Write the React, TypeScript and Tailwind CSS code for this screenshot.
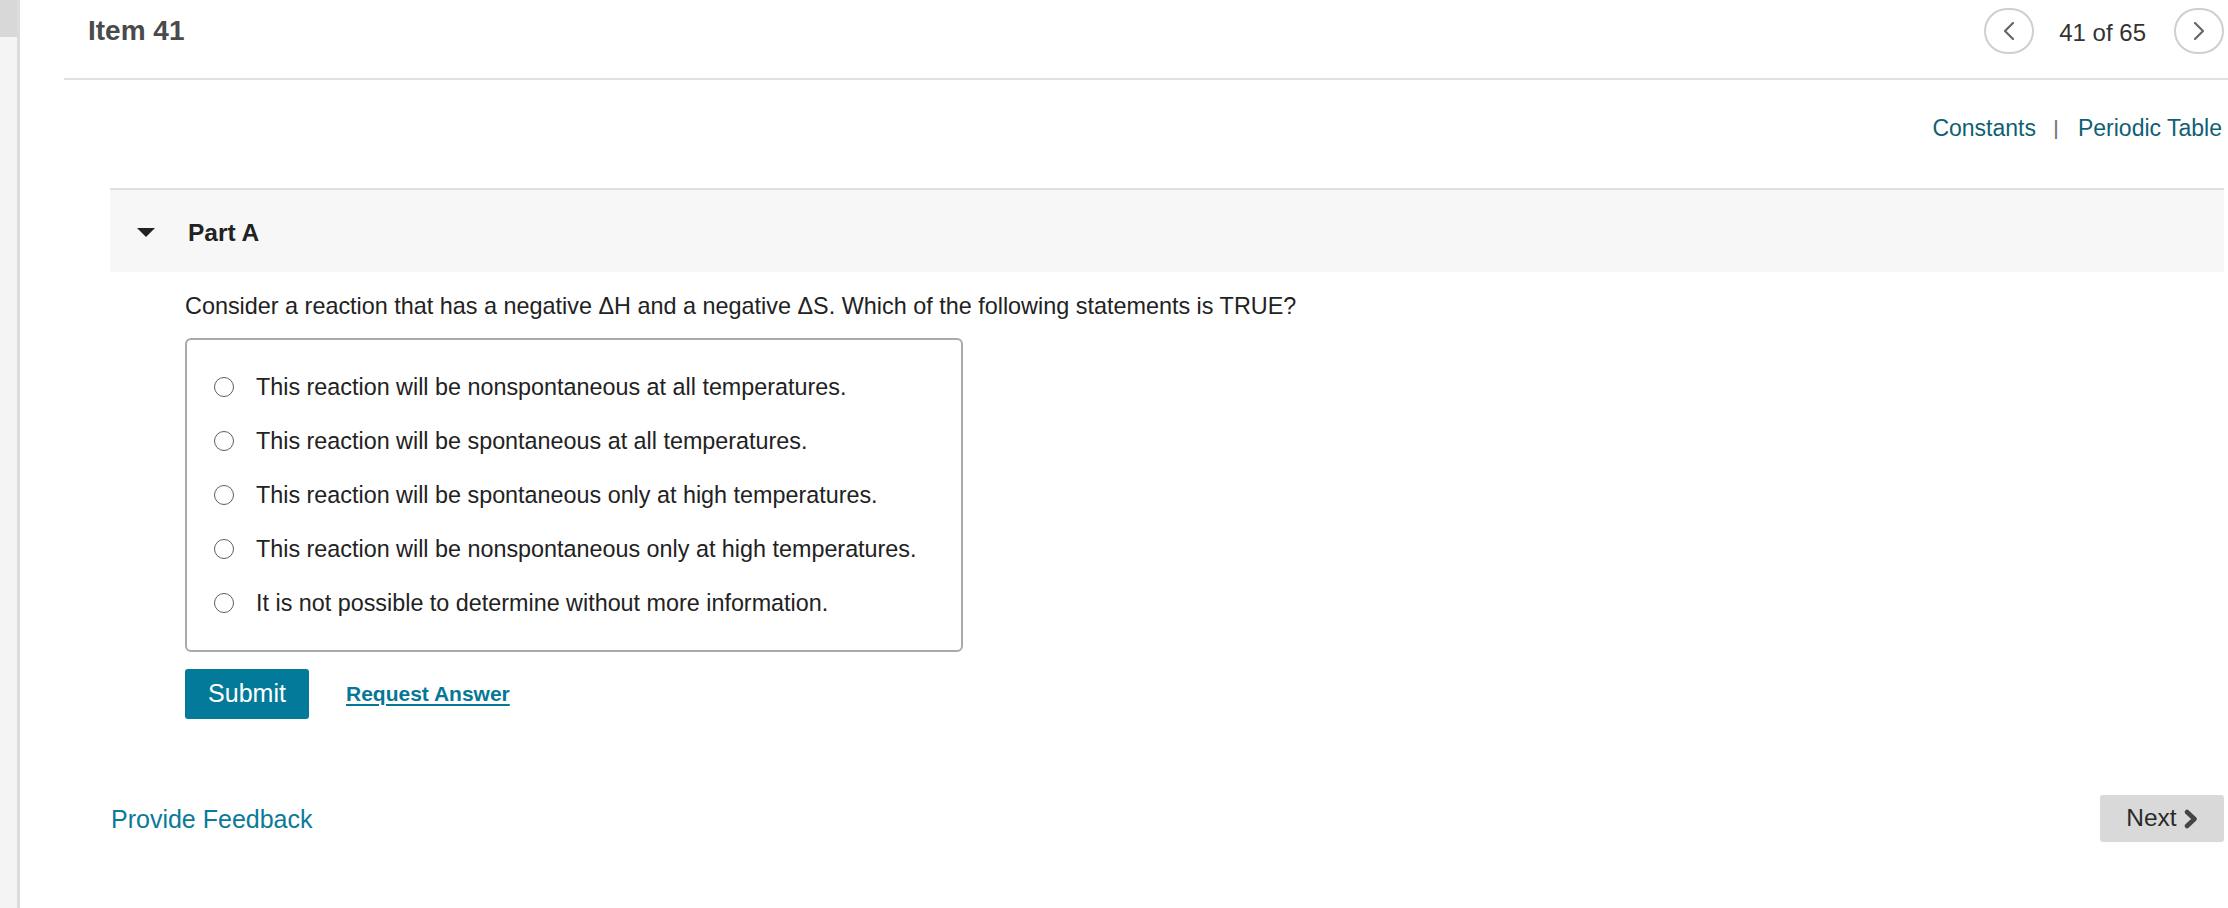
import React from "react";

const options = [
  "This reaction will be nonspontaneous at all temperatures.",
  "This reaction will be spontaneous at all temperatures.",
  "This reaction will be spontaneous only at high temperatures.",
  "This reaction will be nonspontaneous only at high temperatures.",
  "It is not possible to determine without more information.",
];

function Chevron({ dir }: { dir: "left" | "right" }) {
  return (
    <svg width="14" height="20" viewBox="0 0 14 20" fill="none">
      {dir === "left" ? (
        <polyline points="11,2 3,10 11,18" stroke="#666" strokeWidth="2.2" strokeLinecap="round" strokeLinejoin="round" />
      ) : (
        <polyline points="3,2 11,10 3,18" stroke="#666" strokeWidth="2.2" strokeLinecap="round" strokeLinejoin="round" />
      )}
    </svg>
  );
}

export default function App() {
  return (
    <div className="flex h-[908px] w-[2228px] bg-white font-['Liberation_Sans',Arial,sans-serif] overflow-hidden">
      {/* sidebar */}
      <div className="flex w-[20px] flex-col border-r-[3px] border-[#dcdcdc] bg-[#f4f4f4]">
        <div className="h-[37px] bg-[#d8d8d8]" />
      </div>

      <div className="flex flex-1 flex-col">
        {/* header */}
        <div className="ml-[44px] h-[80px] border-b-2 border-[#e0e0e0]">
          <div className="flex h-[62px] items-center justify-between pl-[24px] pr-[4px]">
            <div className="text-[28px] font-bold leading-[28px] text-[#4a4a4a]">Item 41</div>
            <div className="flex items-center">
              <div className="flex h-[46px] w-[50px] items-center justify-center rounded-full border-2 border-[#cfcfcf]">
                <Chevron dir="left" />
              </div>
              <div className="ml-[25px] mr-[28px] mt-[4px] text-[24px] leading-[24px] text-[#333]">41 of 65</div>
              <div className="flex h-[46px] w-[50px] items-center justify-center rounded-full border-2 border-[#cfcfcf]">
                <Chevron dir="right" />
              </div>
            </div>
          </div>
        </div>

        {/* links */}
        <div className="flex h-[108px] items-start justify-end pr-[6px] pt-[37px] text-[23px] leading-[23px]">
          <span className="text-[#0f5f75]">Constants</span>
          <span className="ml-[17px] mr-[19px] scale-y-90 text-[#777]">|</span>
          <span className="text-[#0f5f75]">Periodic Table</span>
        </div>

        {/* part section */}
        <div className="ml-[90px] mr-[4px] flex flex-col">
          <div className="border-t-2 border-[#e0e0e0]">
            <div className="flex h-[82px] items-center bg-[#f7f7f7] pl-[27px] pt-[3px]">
              <svg width="18" height="9" viewBox="0 0 18 9">
                <polygon points="0,0 18,0 9,9" fill="#222" />
              </svg>
              <span className="ml-[33px] text-[24.5px] font-bold leading-[24px] text-[#222]">Part A</span>
            </div>
          </div>

          <div className="pl-[75px]">
            <p className="mt-[22px] text-[23.4px] leading-[24px] text-[#222]">
              Consider a reaction that has a negative ΔH and a negative ΔS. Which of the following statements is TRUE?
            </p>

            <div className="mt-[20px] w-[778px] rounded-[6px] border-2 border-[#a9a9a9] py-[20px] pl-[27px]">
              {options.map((o) => (
                <div key={o} className="flex h-[54px] items-center">
                  <div className="h-[20px] w-[20px] rounded-full border-[1.5px] border-[#5f5f5f] bg-white" />
                  <span className="ml-[22px] text-[23.35px] leading-[24px] text-[#222]">{o}</span>
                </div>
              ))}
            </div>

            <div className="mt-[17px] flex items-center">
              <div className="flex h-[50px] w-[124px] items-center justify-center rounded-[3px] bg-[#037a99] text-[25px] text-white">
                Submit
              </div>
              <span className="ml-[37px] text-[21px] font-bold text-[#067796] underline underline-offset-[3px]">
                Request Answer
              </span>
            </div>
          </div>

          <div className="mt-[76px] flex h-[47px] items-center justify-between">
            <span className="ml-[1px] mt-[3px] text-[25px] text-[#0a7a98]">Provide Feedback</span>
            <div className="flex h-[47px] w-[124px] items-center justify-center rounded-[3px] bg-[#d9d9d9]">
              <span className="text-[24.5px] text-[#2a2a2a]">Next</span>
              <svg className="ml-[7px]" width="14" height="20" viewBox="0 0 14 20">
                <polyline points="3,3 10.5,10 3,17" fill="none" stroke="#444" strokeWidth="4.5" strokeLinecap="round" strokeLinejoin="round" />
              </svg>
            </div>
          </div>
        </div>
      </div>
    </div>
  );
}
